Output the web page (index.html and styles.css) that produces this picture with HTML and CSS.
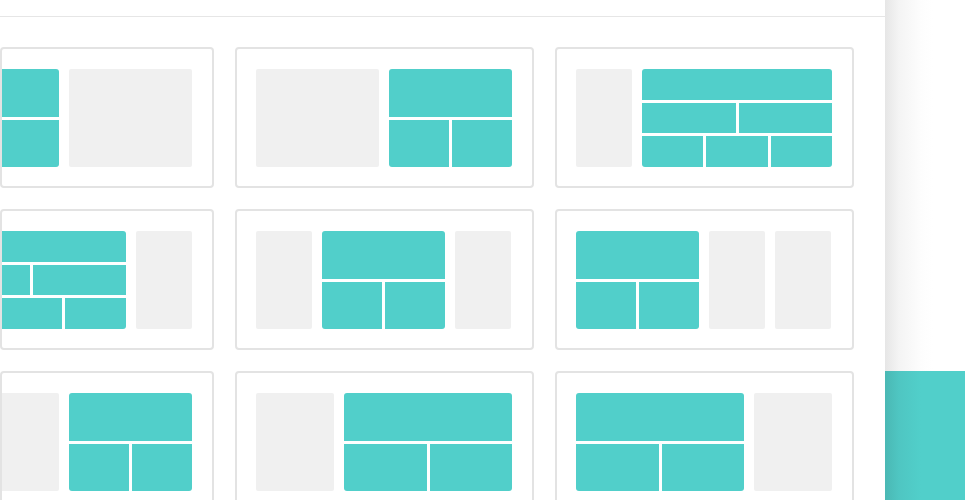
FILE: index.html
```html
<!DOCTYPE html>
<html>
<head>
<meta charset="utf-8">
<link rel="stylesheet" href="styles.css">
</head>
<body>
<div class="app">
  <main class="main">
    <div class="header"></div>
    <div class="grid">
      <div class="row">
        <div class="card first">
          <div class="layout c-half">
            <div class="t"><div class="r"><i></i></div><div class="r"><i></i></div></div>
            <div class="g"></div>
          </div>
        </div>
        <div class="card">
          <div class="layout c-half">
            <div class="g"></div>
            <div class="t"><div class="r"><i></i></div><div class="r"><i></i><i></i></div></div>
          </div>
        </div>
        <div class="card">
          <div class="layout c-narrow-wide">
            <div class="g"></div>
            <div class="t t3"><div class="r"><i></i></div><div class="r"><i></i><i></i></div><div class="r"><i></i><i></i><i></i></div></div>
          </div>
        </div>
      </div>
      <div class="row">
        <div class="card first">
          <div class="layout c-wide-narrow">
            <div class="t t3"><div class="r"><i></i></div><div class="r"><i></i><i></i></div><div class="r"><i></i><i></i><i></i></div></div>
            <div class="g"></div>
          </div>
        </div>
        <div class="card">
          <div class="layout c-three">
            <div class="g"></div>
            <div class="t"><div class="r"><i></i></div><div class="r"><i></i><i></i></div></div>
            <div class="g"></div>
          </div>
        </div>
        <div class="card">
          <div class="layout c-wide-two">
            <div class="t"><div class="r"><i></i></div><div class="r"><i></i><i></i></div></div>
            <div class="g"></div>
            <div class="g"></div>
          </div>
        </div>
      </div>
      <div class="row">
        <div class="card first">
          <div class="layout c-half">
            <div class="g"></div>
            <div class="t"><div class="r"><i></i></div><div class="r"><i></i><i></i></div></div>
          </div>
        </div>
        <div class="card">
          <div class="layout c-side-main">
            <div class="g"></div>
            <div class="t"><div class="r"><i></i></div><div class="r"><i></i><i></i></div></div>
          </div>
        </div>
        <div class="card">
          <div class="layout c-main-side">
            <div class="t"><div class="r"><i></i></div><div class="r"><i></i><i></i></div></div>
            <div class="g"></div>
          </div>
        </div>
      </div>
    </div>
  </main>
  <aside class="side">
    <div class="side-fill"></div>
    <div class="side-active"></div>
  </aside>
</div>
</body>
</html>
```

FILE: styles.css
```css
* { box-sizing: border-box; }
html, body { margin: 0; padding: 0; }
body {
  width: 965px;
  height: 500px;
  overflow: hidden;
  background: #fff;
  font-family: "Liberation Sans", Arial, sans-serif;
}
.app {
  display: flex;
  height: 500px;
}
.main {
  width: 885px;
  flex-shrink: 0;
  background: #fff;
  overflow: hidden;
}
.header {
  height: 17px;
  border-bottom: 1px solid #e6e6e6;
}
.grid {
  padding-top: 30px;
  display: flex;
  flex-direction: column;
  gap: 21px;
}
.row {
  display: flex;
  gap: 21px;
}
.card {
  width: 299px;
  height: 141px;
  flex-shrink: 0;
  border: 2px solid #e3e3e3;
  border-radius: 4px;
  padding: 20px 20px 19px 19px;
  background: #fff;
  display: flex;
  justify-content: flex-end;
}
.card.first {
  width: 214px;
  overflow: hidden;
}
.layout {
  width: 256px;
  height: 98px;
  flex-shrink: 0;
  display: grid;
  gap: 10px;
}
.c-half { grid-template-columns: 1fr 1fr; }
.c-narrow-wide { grid-template-columns: 56px 1fr; }
.c-wide-narrow { grid-template-columns: 1fr 56px; }
.c-three { grid-template-columns: 56px 123px 56px; }
.c-wide-two { grid-template-columns: 123px 56px 56px; }
.c-side-main { grid-template-columns: 78px 1fr; }
.c-main-side { grid-template-columns: 1fr 78px; }

.g {
  background: #f0f0f0;
  border-radius: 2px;
}
.t {
  display: grid;
  grid-template-rows: 1fr 1fr;
  gap: 3px;
  border-radius: 3px;
  overflow: hidden;
}
.t.t3 { grid-template-rows: 1fr 1fr 1fr; }
.r {
  display: flex;
  gap: 3px;
}
.r i {
  flex: 1;
  background: #51cfca;
}

.side {
  width: 80px;
  flex-shrink: 0;
  display: flex;
  flex-direction: column;
}
.side-fill {
  height: 371px;
  background: linear-gradient(to right, #e6e6e6 0, #f4f4f4 14px, #fdfdfd 36px, #fff 48px);
}
.side-active {
  flex: 1;
  background: linear-gradient(to right, #4ab8b4 0, #4fc6c2 14px, #51cfca 36px);
}
```
